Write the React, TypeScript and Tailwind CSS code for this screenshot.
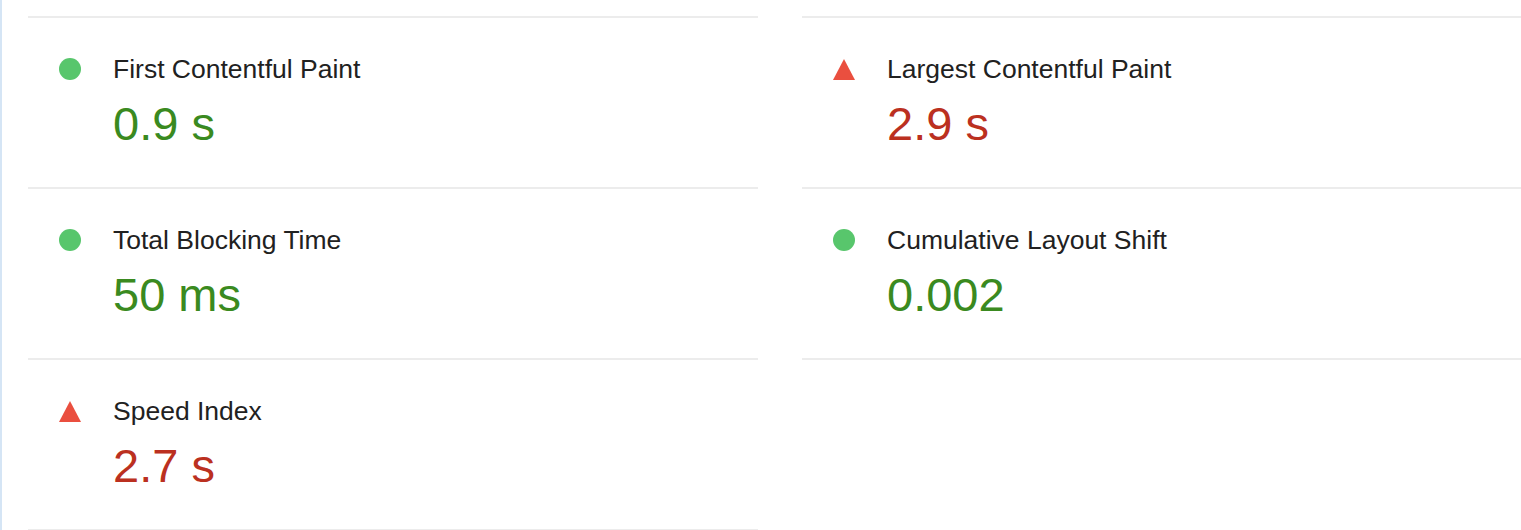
import React from "react";

type Metric = {
  label: string;
  value: string;
  pass: boolean;
};

const left: Metric[] = [
  { label: "First Contentful Paint", value: "0.9 s", pass: true },
  { label: "Total Blocking Time", value: "50 ms", pass: true },
  { label: "Speed Index", value: "2.7 s", pass: false },
];

const right: Metric[] = [
  { label: "Largest Contentful Paint", value: "2.9 s", pass: false },
  { label: "Cumulative Layout Shift", value: "0.002", pass: true },
];

function Icon({ pass }: { pass: boolean }) {
  if (pass) {
    return <div className="w-[22px] h-[22px] rounded-full bg-[#58c66c]" />;
  }
  return (
    <svg width="22" height="21" viewBox="0 0 22 21">
      <polygon points="11,0 22,21 0,21" fill="#ea4f3f" />
    </svg>
  );
}

function MetricRow({ m }: { m: Metric }) {
  return (
    <div className="h-[171px] border-t-2 border-[#ececec] pt-[36px] pl-[31px] flex">
      <div className="w-[22px] h-[30px] flex items-center justify-center">
        <Icon pass={m.pass} />
      </div>
      <div className="ml-[32px] flex flex-col">
        <div className="text-[26.5px] leading-[30px] text-[#212121]">{m.label}</div>
        <div
          className={`mt-[13px] text-[47px] leading-[54px] ${
            m.pass ? "text-[#3a8a20]" : "text-[#bb3020]"
          }`}
        >
          {m.value}
        </div>
      </div>
    </div>
  );
}

export default function App() {
  return (
    <div
      className="w-[1521px] h-[530px] overflow-hidden bg-white border-l-2 border-[#d5e5f5] flex pt-[16px] pl-[26px]"
      style={{ fontFamily: '"Liberation Sans", Arial, sans-serif' }}
    >
      <div className="w-[730px] shrink-0 border-b-2 border-[#ececec] self-start">
        {left.map((m, i) => (
          <MetricRow key={i} m={m} />
        ))}
      </div>
      <div className="w-[730px] shrink-0 ml-[44px] border-b-2 border-[#ececec] self-start">
        {right.map((m, i) => (
          <MetricRow key={i} m={m} />
        ))}
      </div>
    </div>
  );
}
